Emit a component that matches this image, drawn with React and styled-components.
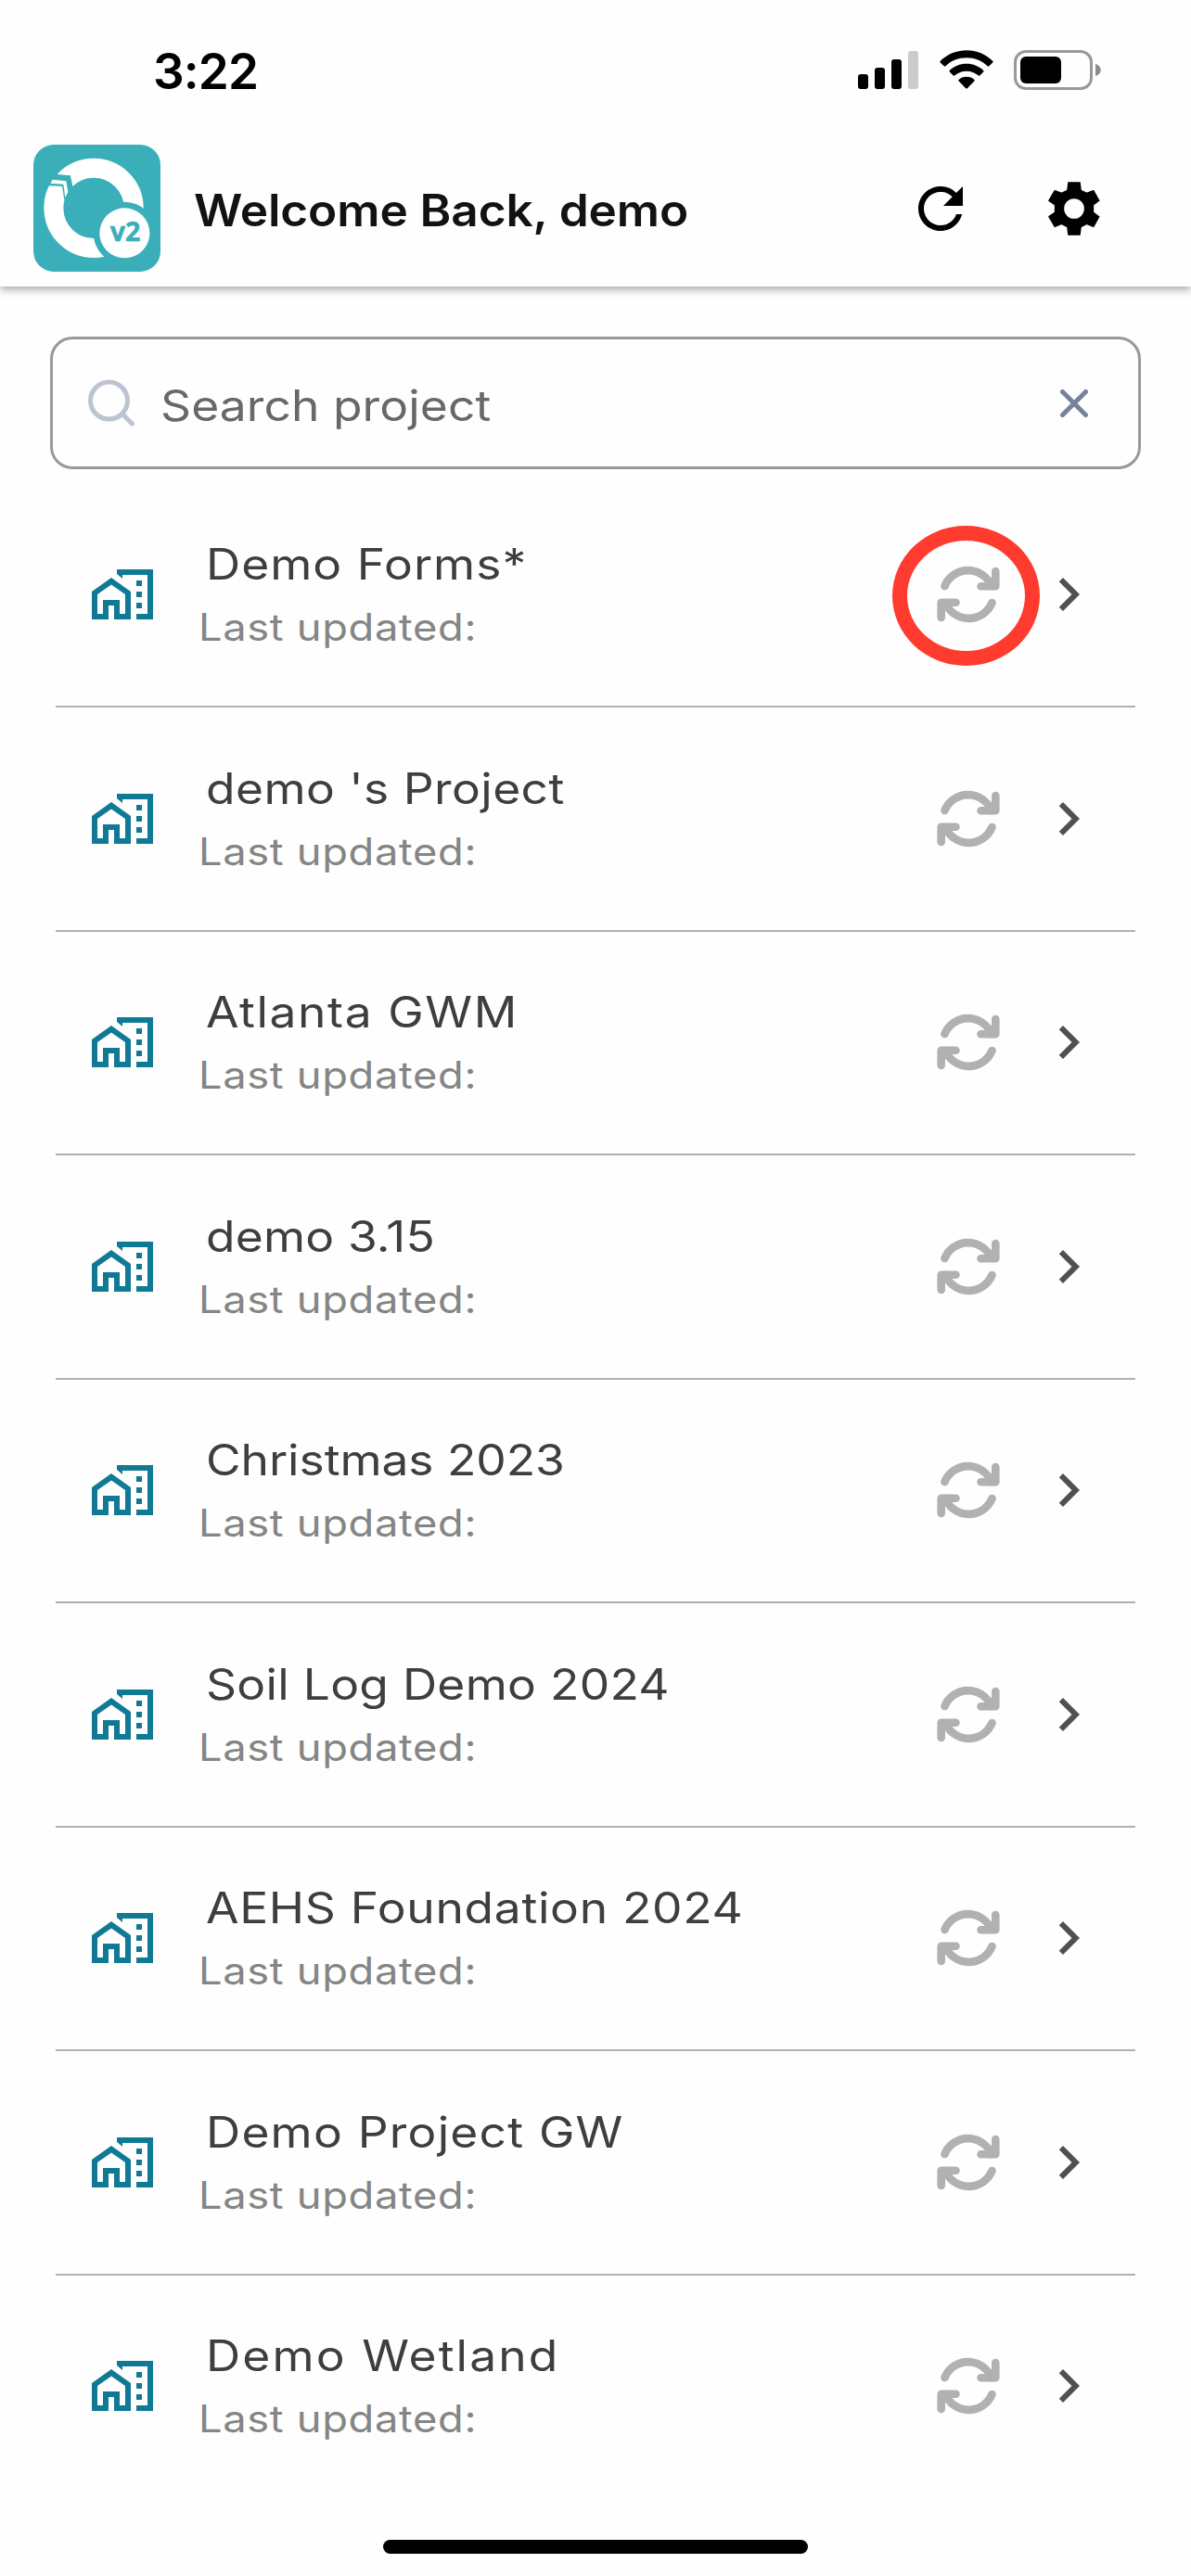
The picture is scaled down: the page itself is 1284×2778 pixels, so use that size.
import React from "react";
import styled, { createGlobalStyle } from "styled-components";

const GlobalStyle = createGlobalStyle`
  *, *::before, *::after { box-sizing: border-box; }
  body {
    margin: 0;
    background: #fefefe;
    font-family: Inter, "Open Sans", sans-serif;
  }
  svg { display: block; flex: none; }
`;

const Screen = styled.div`
  width: 1284px;
  height: 2778px;
  display: flex;
  flex-direction: column;
  background: #fefefe;
  overflow: hidden;
`;

const StatusBar = styled.div`
  height: 151px;
  flex: none;
  display: flex;
  align-items: center;
  justify-content: space-between;
  padding: 0 97px 0 165px;
`;

const Clock = styled.time`
  padding-top: 2px;
  font-size: 53px;
  font-weight: 600;
  letter-spacing: -0.9px;
  line-height: 64px;
  color: #000;
`;

const StatusIcons = styled.div`
  display: flex;
  align-items: center;
`;

const Signal = styled.div`
  display: flex;
  align-items: flex-end;
  gap: 7px;
  height: 41px;
  margin-right: 23px;
`;

const SignalBar = styled.span`
  width: 11px;
  height: ${(p) => p.$height}px;
  border-radius: 3px;
  background: ${(p) => (p.$off ? "#cbcbcb" : "#000")};
`;

const BatterySlot = styled.span`
  margin-left: 22px;
`;

const Header = styled.header`
  height: 158px;
  flex: none;
  display: flex;
  align-items: center;
  padding: 0 80px 11px 36px;
  background: #fefefe;
  box-shadow: 0 3px 9px rgba(0, 0, 0, 0.36);
  clip-path: inset(0 0 -24px 0);
`;

const Greeting = styled.h1`
  flex: 1;
  margin: 0 0 0 36px;
  padding-top: 4px;
  font-size: 48px;
  font-weight: 600;
  letter-spacing: -0.1px;
  line-height: 60px;
  color: #121212;
  white-space: nowrap;
  transform: scaleX(1.07);
  transform-origin: left;
`;

const IconButton = styled.button`
  display: flex;
  align-items: center;
  justify-content: center;
  width: 92px;
  height: 92px;
  margin-left: ${(p) => p.$gap || 0}px;
  padding: 0;
  border: 0;
  background: none;
`;

const SearchBox = styled.div`
  flex: none;
  display: flex;
  align-items: center;
  height: 143px;
  margin: 54px 54px 0;
  padding: 0 53px 0 38px;
  border: 3px solid #999;
  border-radius: 24px;
`;

const SearchHint = styled.span`
  flex: 1;
  margin-left: 26px;
  padding-top: 5px;
  font-size: 46px;
  letter-spacing: 0.07px;
  line-height: 60px;
  color: #686868;
  white-space: nowrap;
  transform: scaleX(1.12);
  transform-origin: left;
`;

const ProjectList = styled.ul`
  flex: 1;
  margin: 15.5px 60px 0;
  padding: 0;
  list-style: none;
`;

const ProjectRow = styled.li`
  height: 241.5px;
  display: flex;
  align-items: center;
  padding: 0 36px;
  border-bottom: 2px solid #b0b0b0;
  &:last-child { border-bottom-color: transparent; }
`;

const Labels = styled.div`
  flex: 1;
  display: flex;
  flex-direction: column;
  margin-left: 46px;
  padding-top: 3px;
  white-space: nowrap;
`;

const ProjectName = styled.span`
  margin-left: 8px;
  font-size: 46px;
  line-height: 68px;
  letter-spacing: ${(p) => p.$tracking}px;
  color: #3d3e3e;
  transform: scaleX(1.12);
  transform-origin: left;
`;

const Updated = styled.span`
  padding-top: 1px;
  font-size: 40.4px;
  line-height: 68px;
  letter-spacing: 0.6px;
  color: #858585;
  transform: scaleX(1.12);
  transform-origin: left;
`;

const SyncButton = styled(IconButton)`
  position: relative;
  margin-right: 26px;
`;

const Highlight = styled.span`
  position: absolute;
  left: -36px;
  top: -28px;
  width: 159px;
  height: 151px;
  border: 16px solid #ff3b30;
  border-radius: 50%;
`;

const HomeArea = styled.div`
  flex: none;
  display: flex;
  justify-content: center;
  padding-bottom: 24px;
`;

const HomeIndicator = styled.div`
  width: 458px;
  height: 15px;
  border-radius: 8px;
  background: #000;
`;

const Wifi = () => (
  <svg width="58" height="43" viewBox="0 0 58 43">
    <path d="M29 .2C40 .2 50 4.500 57.200 11.800Q58 12.700 57.200 13.500L53.300 17.300Q52.500 18 51.600 17.200C45.500 11.500 37.700 8.300 29 8.300S12.500 11.500 6.400 17.200Q5.500 18 4.700 17.300L.8 13.500Q0 12.700.8 11.800C8 4.500 18 .2 29 .2Z" />
    <path d="M29 14.800C36.200 14.800 42.500 17.500 47.200 21.900Q48 22.700 47.200 23.500L43.200 27.400Q42.400 28 41.600 27.300C38.200 24.400 33.900 22.700 29 22.700S19.800 24.400 16.400 27.300Q15.600 28 14.800 27.400L10.800 23.500Q10 22.700 10.800 21.900C15.500 17.500 21.800 14.800 29 14.800Z" />
    <path d="M29 28.800C32.300 28.800 35.200 29.900 37.400 31.900Q38.200 32.700 37.400 33.500L29.800 41.200Q29 42 28.200 41.200L20.600 33.500Q19.800 32.700 20.600 31.900C22.800 29.900 25.700 28.800 29 28.800Z" />
  </svg>
);

const Battery = () => (
  <svg width="94" height="43" viewBox="0 0 94 43">
    <rect x="1.500" y="1.500" width="82" height="40" rx="11.500" fill="none" stroke="#999" strokeWidth="3" />
    <rect x="7" y="7" width="44" height="29" rx="6" />
    <path d="M88 15C91.500 16 93.700 18.500 93.700 21.500S91.500 27 88 28Z" fill="#8c8c8c" />
  </svg>
);

const Logo = () => (
  <svg width="137" height="137" viewBox="20 18 411 411">
    <rect x="20" y="18" width="411" height="411" rx="66" fill="#3aafb9" />
    <circle cx="215" cy="223" r="129.500" fill="none" stroke="#fff" strokeWidth="63" />
    <path d="M60 90L98 114L140 118L147 153L120 197L113 153L50 149Z" fill="#3aafb9" />
    <path d="M82 131L126 136L132 171L123 189L117 146L75 143Z" fill="#fff" />
    <circle cx="315" cy="304" r="101" fill="#3aafb9" />
    <circle cx="315" cy="304" r="81" fill="#fff" />
    <text x="317" y="330" textAnchor="middle" fontFamily="'Open Sans', 'Noto Sans', sans-serif" fontWeight="700" fontSize="86" fill="#3aafb9" stroke="#3aafb9" strokeWidth="1.500">v2</text>
  </svg>
);

const Refresh = () => (
  <svg width="72" height="72" viewBox="0 0 24 24">
    <path d="M17.650 6.350A7.958 7.958 0 0 0 12 4c-4.420 0-7.990 3.580-7.990 8s3.570 8 7.990 8c3.730 0 6.840-2.550 7.730-6h-2.080A5.990 5.990 0 0 1 12 18c-3.310 0-6-2.690-6-6s2.690-6 6-6c1.660 0 3.140.690 4.220 1.780L13 11h7V4l-2.350 2.350z" />
  </svg>
);

const Gear = () => (
  <svg width="80" height="80" viewBox="-5.500 0 240 240">
    <path
      fillRule="evenodd"
      stroke="#000"
      strokeWidth="4"
      strokeLinejoin="round"
      d="M96 36H133L136 61L155 70L177 62L195 94L176 108V132L195 146L177 178L155 169L136 179L133 204H96L93 179L74 169L52 178L33 146L53 132V108L33 94L52 62L74 70L93 61ZM114.500 85.500a34.500 34.500 0 1 0 0 69a34.500 34.500 0 1 0 0-69Z"
    />
  </svg>
);

const SearchIcon = () => (
  <svg width="52" height="52" viewBox="0 0 52 52" fill="none" stroke="#bcc4d3" strokeWidth="5" strokeLinecap="round">
    <circle cx="22.500" cy="23" r="20" />
    <path d="M37.500 38L47.500 48" />
  </svg>
);

const ClearIcon = () => (
  <svg width="32" height="32" viewBox="0 0 32 32" stroke="#76819b" strokeWidth="5" strokeLinecap="round">
    <path d="M3.500 3.500L28.500 28.500M28.500 3.500L3.500 28.500" />
  </svg>
);

const HomeWork = () => (
  <svg width="72" height="72" viewBox="0 0 24 24" fill="#107a95">
    <path fillRule="evenodd" d="M1 11v10h6v-5h2v5h6V11L8 6l-7 5zm12 8h-2v-5H5v5H3v-7l5-3.500 5 3.500v7z" />
    <path d="M17 7h2v2h-2zM17 11h2v2h-2zM17 15h2v2h-2z" />
    <path d="M10 3v1.700l2 1.650V5h9v14h-4v2h6V3z" />
  </svg>
);

const Sync = () => (
  <svg width="72" height="72" viewBox="0 0 72 72" fill="none" stroke="#b1b1b1" strokeWidth="8.600" strokeLinecap="round" strokeLinejoin="round">
    <path d="M10.500 27A27.200 27.200 0 0 1 61 27.500M65.300 11V27.300H49.500" />
    <path d="M61.500 45A27.200 27.200 0 0 1 11 44.500M6.700 61V44.700H22.500" />
  </svg>
);

const Chevron = () => (
  <svg width="72" height="72" viewBox="0 0 24 24" fill="#505050">
    <path d="M10 6L8.590 7.410 13.170 12l-4.580 4.590L10 18l6-6z" />
  </svg>
);

const projects = [
  { name: "Demo Forms*", tracking: 0.88, highlighted: true },
  { name: "demo 's Project", tracking: 0.38 },
  { name: "Atlanta GWM", tracking: 1.4 },
  { name: "demo 3.15", tracking: 0.15 },
  { name: "Christmas 2023", tracking: -0.06 },
  { name: "Soil Log Demo 2024", tracking: 0.24 },
  { name: "AEHS Foundation 2024", tracking: 0.6 },
  { name: "Demo Project GW", tracking: 1.07 },
  { name: "Demo Wetland", tracking: 1.88 },
];

export default function App() {
  return (
    <Screen>
      <GlobalStyle />
      <StatusBar>
        <Clock>3:22</Clock>
        <StatusIcons>
          <Signal>
            <SignalBar $height={16} />
            <SignalBar $height={23} />
            <SignalBar $height={32} />
            <SignalBar $height={41} $off />
          </Signal>
          <Wifi />
          <BatterySlot><Battery /></BatterySlot>
        </StatusIcons>
      </StatusBar>
      <Header>
        <Logo />
        <Greeting>Welcome Back, demo</Greeting>
        <IconButton aria-label="Refresh"><Refresh /></IconButton>
        <IconButton aria-label="Settings" $gap={52}><Gear /></IconButton>
      </Header>
      <SearchBox>
        <SearchIcon />
        <SearchHint>Search project</SearchHint>
        <ClearIcon />
      </SearchBox>
      <ProjectList>
        {projects.map((project) => (
          <ProjectRow key={project.name}>
            <HomeWork />
            <Labels>
              <ProjectName $tracking={project.tracking}>{project.name}</ProjectName>
              <Updated>Last updated:</Updated>
            </Labels>
            <SyncButton aria-label="Sync">
              <Sync />
              {project.highlighted && <Highlight />}
            </SyncButton>
            <Chevron />
          </ProjectRow>
        ))}
      </ProjectList>
      <HomeArea><HomeIndicator /></HomeArea>
    </Screen>
  );
}
